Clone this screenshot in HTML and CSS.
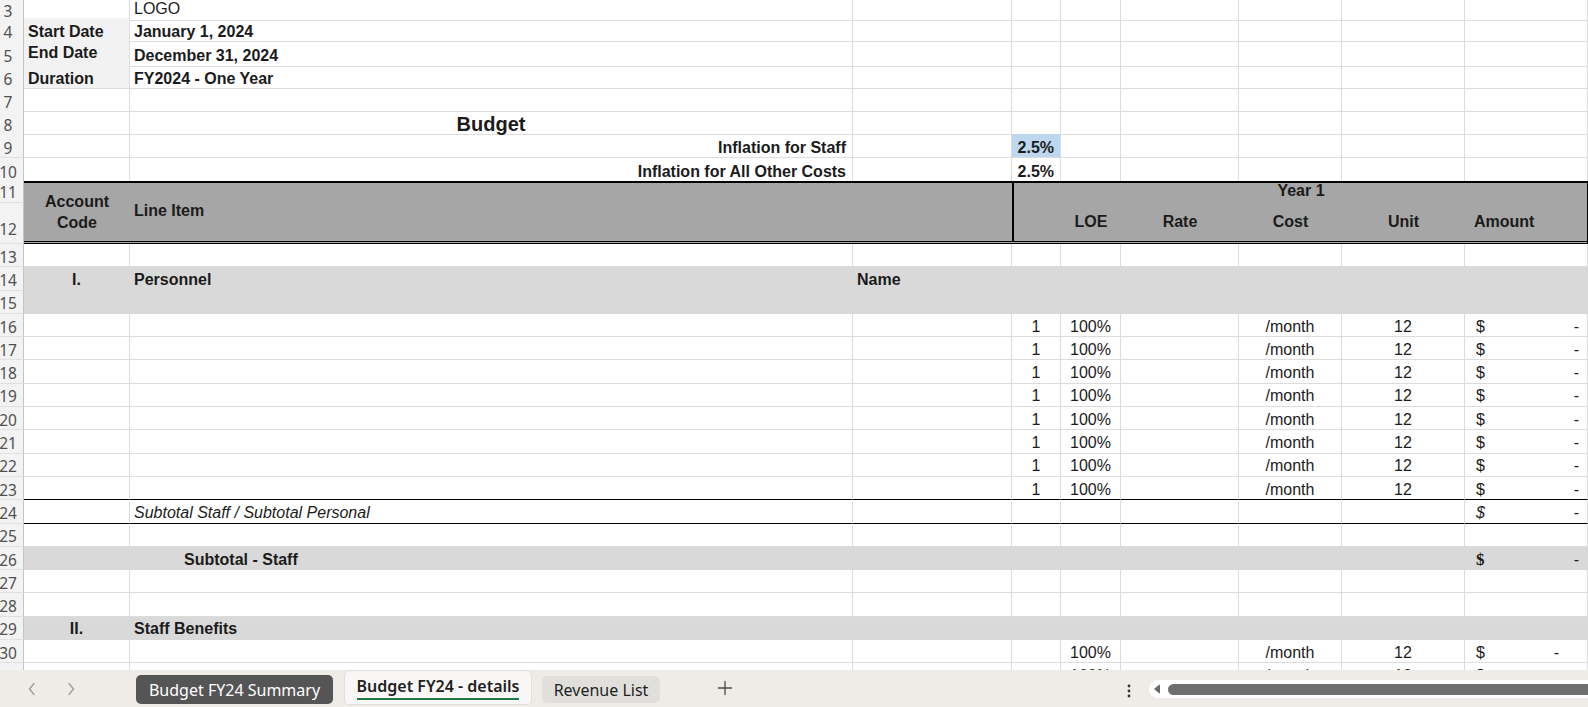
FILE: index.html
```html
<!DOCTYPE html>
<html>
<head>
<meta charset="utf-8">
<title>Budget FY24 - details</title>
<link rel="stylesheet" href="styles.css">
</head>
<body>
<div class="app">
  <div class="sheet">
    <div class="rows">
      <div class="row u top">
        <div class="rh">3</div><div></div><div>LOGO</div><div></div><div></div><div></div><div></div><div></div><div></div><div></div>
      </div>
      <div class="row u">
        <div class="rh">4</div><div class="lab b">Start Date</div><div class="b">January 1, 2024</div><div></div><div></div><div></div><div></div><div></div><div></div><div></div>
      </div>
      <div class="row u">
        <div class="rh">5</div><div class="lab b up">End Date</div><div class="b">December 31, 2024</div><div></div><div></div><div></div><div></div><div></div><div></div><div></div>
      </div>
      <div class="row u">
        <div class="rh">6</div><div class="lab b">Duration</div><div class="b">FY2024 - One Year</div><div></div><div></div><div></div><div></div><div></div><div></div><div></div>
      </div>
      <div class="row u">
        <div class="rh">7</div><div></div><div></div><div></div><div></div><div></div><div></div><div></div><div></div><div></div>
      </div>
      <div class="row u">
        <div class="rh">8</div><div></div><div class="budget b">Budget</div><div></div><div></div><div></div><div></div><div></div><div></div><div></div>
      </div>
      <div class="row u">
        <div class="rh">9</div><div></div><div class="r b">Inflation for Staff</div><div></div><div class="r b blue">2.5%</div><div></div><div></div><div></div><div></div><div></div>
      </div>
      <div class="row u">
        <div class="rh">10</div><div></div><div class="r b">Inflation for All Other Costs</div><div></div><div class="r b">2.5%</div><div></div><div></div><div></div><div></div><div></div>
      </div>

      <div class="hdr">
        <div class="rh rh11">11</div>
        <div class="rh rh12">12</div>
        <div class="hbox">
          <div class="acct">Account<br>Code</div>
          <div class="li">Line Item</div>
          <div class="yr">Year 1</div>
          <div class="dbl"></div>
          <div class="hc c5">LOE</div>
          <div class="hc c6">Rate</div>
          <div class="hc c7">Cost</div>
          <div class="hc c8">Unit</div>
          <div class="hc c9 amt">Amount</div>
        </div>
      </div>

      <div class="row">
        <div class="rh">13</div><div></div><div></div><div></div><div></div><div></div><div></div><div></div><div></div><div></div>
      </div>
      <div class="row g">
        <div class="rh">14</div><div class="ctr b">I.</div><div class="b">Personnel</div><div class="b">Name</div><div></div><div></div><div></div><div></div><div></div><div></div>
      </div>
      <div class="row g">
        <div class="rh">15</div><div></div><div></div><div></div><div></div><div></div><div></div><div></div><div></div><div></div>
      </div>
      <div class="row">
        <div class="rh">16</div><div></div><div></div><div></div><div class="ctr">1</div><div class="ctr">100%</div><div></div><div class="ctr">/month</div><div class="ctr">12</div><div class="acc"><span>$</span><span>-</span></div>
      </div>
      <div class="row">
        <div class="rh">17</div><div></div><div></div><div></div><div class="ctr">1</div><div class="ctr">100%</div><div></div><div class="ctr">/month</div><div class="ctr">12</div><div class="acc"><span>$</span><span>-</span></div>
      </div>
      <div class="row">
        <div class="rh">18</div><div></div><div></div><div></div><div class="ctr">1</div><div class="ctr">100%</div><div></div><div class="ctr">/month</div><div class="ctr">12</div><div class="acc"><span>$</span><span>-</span></div>
      </div>
      <div class="row">
        <div class="rh">19</div><div></div><div></div><div></div><div class="ctr">1</div><div class="ctr">100%</div><div></div><div class="ctr">/month</div><div class="ctr">12</div><div class="acc"><span>$</span><span>-</span></div>
      </div>
      <div class="row">
        <div class="rh">20</div><div></div><div></div><div></div><div class="ctr">1</div><div class="ctr">100%</div><div></div><div class="ctr">/month</div><div class="ctr">12</div><div class="acc"><span>$</span><span>-</span></div>
      </div>
      <div class="row">
        <div class="rh">21</div><div></div><div></div><div></div><div class="ctr">1</div><div class="ctr">100%</div><div></div><div class="ctr">/month</div><div class="ctr">12</div><div class="acc"><span>$</span><span>-</span></div>
      </div>
      <div class="row">
        <div class="rh">22</div><div></div><div></div><div></div><div class="ctr">1</div><div class="ctr">100%</div><div></div><div class="ctr">/month</div><div class="ctr">12</div><div class="acc"><span>$</span><span>-</span></div>
      </div>
      <div class="row pre-sub">
        <div class="rh">23</div><div></div><div></div><div></div><div class="ctr">1</div><div class="ctr">100%</div><div></div><div class="ctr">/month</div><div class="ctr">12</div><div class="acc"><span>$</span><span>-</span></div>
      </div>
      <div class="row sub">
        <div class="rh">24</div><div></div><div class="it">Subtotal Staff / Subtotal Personal</div><div></div><div></div><div></div><div></div><div></div><div></div><div class="acc"><span class="it">$</span><span>-</span></div>
      </div>
      <div class="row">
        <div class="rh">25</div><div></div><div></div><div></div><div></div><div></div><div></div><div></div><div></div><div></div>
      </div>
      <div class="row g">
        <div class="rh">26</div><div></div><div class="b ind">Subtotal - Staff</div><div></div><div></div><div></div><div></div><div></div><div></div><div class="acc"><span class="serif">$</span><span>-</span></div>
      </div>
      <div class="row">
        <div class="rh">27</div><div></div><div></div><div></div><div></div><div></div><div></div><div></div><div></div><div></div>
      </div>
      <div class="row">
        <div class="rh">28</div><div></div><div></div><div></div><div></div><div></div><div></div><div></div><div></div><div></div>
      </div>
      <div class="row g">
        <div class="rh">29</div><div class="ctr b">II.</div><div class="b">Staff Benefits</div><div></div><div></div><div></div><div></div><div></div><div></div><div></div>
      </div>
      <div class="row">
        <div class="rh">30</div><div></div><div></div><div></div><div></div><div class="ctr">100%</div><div></div><div class="ctr">/month</div><div class="ctr">12</div><div class="acc wide"><span>$</span><span>-</span></div>
      </div>
      <div class="row">
        <div class="rh">31</div><div></div><div></div><div></div><div></div><div class="ctr">100%</div><div></div><div class="ctr">/month</div><div class="ctr">12</div><div class="acc wide"><span>$</span><span>-</span></div>
      </div>
    </div>
  </div>

  <div class="tabbar">
    <div class="nav nl">
      <svg width="10" height="14" viewBox="0 0 10 14"><polyline points="7,1.5 2.5,7 7,12.5" fill="none" stroke="#9a9a9a" stroke-width="1.3" stroke-linecap="round" stroke-linejoin="round"/></svg>
    </div>
    <div class="nav nr">
      <svg width="10" height="14" viewBox="0 0 10 14"><polyline points="3,1.5 7.5,7 3,12.5" fill="none" stroke="#9a9a9a" stroke-width="1.3" stroke-linecap="round" stroke-linejoin="round"/></svg>
    </div>
    <div class="tab dark">Budget FY24 Summary</div>
    <div class="tab active"><span>Budget FY24 - details</span></div>
    <div class="tab light">Revenue List</div>
    <div class="plus">
      <svg width="16" height="16" viewBox="0 0 16 16"><path d="M8 1.5V14.5M1.5 8H14.5" stroke="#4a4a4a" stroke-width="1.3" stroke-linecap="round"/></svg>
    </div>
    <div class="more">
      <svg width="6" height="14" viewBox="0 0 6 14"><circle cx="3" cy="2" r="1.4" fill="#333"/><circle cx="3" cy="7" r="1.4" fill="#333"/><circle cx="3" cy="12" r="1.4" fill="#333"/></svg>
    </div>
    <div class="hs">
      <svg class="arr" width="8" height="10" viewBox="0 0 8 10"><path d="M6.5 1 L1.5 5 L6.5 9 Z" fill="#6a6a6a" stroke="#6a6a6a" stroke-width="1" stroke-linejoin="round"/></svg>
      <div class="thumb"></div>
    </div>
  </div>
</div>
</body>
</html>
```

FILE: styles.css
```css
* { box-sizing: border-box; }

html, body {
  margin: 0;
  padding: 0;
}

body {
  width: 1588px;
  height: 707px;
  overflow: hidden;
  background: #ffffff;
  font-family: "Liberation Sans", Arial, sans-serif;
  font-size: 16px;
  color: #1b1b1b;
}

.app {
  display: flex;
  flex-direction: column;
  height: 707px;
}

.sheet {
  flex: none;
  height: 670px;
  overflow: hidden;
  background: #ffffff;
}

.rows {
  margin-top: -5.25px;
}

.row {
  display: grid;
  grid-template-columns: 24px 106px 723px 159px 49px 60px 118px 103px 123px 123px;
  height: 23.3px;
}

.row.u {
  height: 23.25px;
}

.row > div {
  display: flex;
  align-items: center;
  padding: 3px 4px 0 4px;
  white-space: nowrap;
  border-right: 1px solid #dcdcdc;
  border-bottom: 1px solid #dcdcdc;
  line-height: 18px;
}

.row.u > div {
  padding-top: 5px;
}

.row.top > div {
  padding-top: 3px;
}

.rh,
.row > .rh {
  font-family: "Noto Sans", "Open Sans", sans-serif;
  font-size: 15.5px;
  color: #505050;
  background: #f3f3f3;
  justify-content: center;
  padding: 3px 7px 0 0;
  border-right: 1px solid #c4c4c4;
  border-bottom: 1px solid #e0e0e0;
}

.row.u > .rh {
  padding: 5px 7px 0 0;
}

.row.top > .rh {
  padding: 7px 7px 0 0;
}

.b { font-weight: bold; }
.it { font-style: italic; }

.row > .r {
  justify-content: flex-end;
  padding-right: 6px;
}

.row > .ctr { justify-content: center; }

.row > .lab { background: #f2f2f2; }
.row.u > .up { padding-top: 3px; padding-bottom: 4px; }

.row > .blue { background: #bdd7ee; }

.row.u > .budget {
  justify-content: center;
  font-size: 20px;
  padding-top: 2px;
}

.row > .acc {
  justify-content: space-between;
  padding-left: 11px;
  padding-right: 8px;
}

.row > .acc.wide { padding-right: 28px; }

.row > .ind { padding-left: 54px; }

.serif {
  font-family: "Liberation Serif", "Times New Roman", serif;
  font-weight: bold;
  font-size: 17px;
}

/* gray section rows */
.row.g > div:not(.rh) {
  background: #d9d9d9;
  border-right-color: #d9d9d9;
  border-bottom-color: #d9d9d9;
}

/* subtotal borders */
.row.pre-sub > div:not(.rh),
.row.sub > div:not(.rh) {
  border-bottom-color: #000000;
}

/* header block */
.hdr {
  display: grid;
  grid-template-columns: 24px 1564px;
  grid-template-rows: 22px 41.25px;
  height: 63.25px;
}

.hdr .rh {
  display: flex;
  align-items: center;
}

.rh11 {
  grid-column: 1;
  grid-row: 1;
  padding-top: 2px !important;
}

.rh12 {
  grid-column: 1;
  grid-row: 2;
  align-items: flex-end !important;
  padding-bottom: 3px !important;
}

.hbox {
  grid-column: 2;
  grid-row: 1 / 3;
  background: #a6a6a6;
  border-top: 2px solid #000000;
  border-bottom: 3px double #000000;
  border-right: 1px solid #000000;
  display: grid;
  grid-template-columns: 106px 723px 159px 49px 60px 118px 103px 123px 123px;
  grid-template-rows: 20px 1fr;
  font-weight: bold;
}

.hbox > div {
  display: flex;
  align-items: center;
  white-space: nowrap;
}

.acct {
  grid-column: 1;
  grid-row: 1 / 3;
  justify-content: center;
  text-align: center;
  line-height: 20.5px;
  padding-top: 2px;
}

.li {
  grid-column: 2 / 4;
  grid-row: 1 / 3;
  padding-left: 4px;
  padding-bottom: 1px;
}

.yr {
  grid-column: 4 / 10;
  grid-row: 1;
  justify-content: center;
  border-left: 2px solid #000000;
  padding-bottom: 3px;
}

.dbl {
  grid-column: 4;
  grid-row: 2;
  border-left: 2px solid #000000;
}

.hc {
  grid-row: 2;
  justify-content: center;
}

.c5 { grid-column: 5; }
.c6 { grid-column: 6; }
.c7 { grid-column: 7; }
.c8 { grid-column: 8; }
.c9 { grid-column: 9; }

.hbox > .amt {
  justify-content: flex-start;
  padding-left: 9px;
}

/* sheet tab bar */
.tabbar {
  flex: none;
  height: 37px;
  background: #efece8;
  display: flex;
  align-items: flex-start;
  font-family: "Noto Sans", "Open Sans", sans-serif;
  font-size: 16px;
  color: #1f1f1f;
}

.nav {
  width: 10px;
  height: 14px;
  margin-top: 12px;
  display: flex;
}

.nl { margin-left: 27px; }
.nr { margin-left: 29px; }

.tab {
  display: flex;
  align-items: center;
  justify-content: center;
  white-space: nowrap;
  border-radius: 5px;
}

.tab.dark {
  margin-left: 60px;
  margin-top: 5px;
  width: 197px;
  height: 29px;
  background: #555555;
  color: #ffffff;
}

.tab.active {
  margin-left: 11px;
  margin-top: 0;
  width: 188px;
  height: 35px;
  background: #f8f7f6;
  border: 1px solid #e2dfdb;
  border-radius: 6px 6px 4px 4px;
  align-items: flex-start;
  padding-top: 4px;
  font-weight: 600;
}

.tab.active span {
  display: inline-block;
  line-height: 22px;
  padding-bottom: 1px;
  border-bottom: 2.5px solid #1d7846;
}

.tab.light {
  margin-left: 10px;
  margin-top: 6px;
  width: 118px;
  height: 27px;
  background: #e1dfdc;
}

.plus {
  margin-left: 57px;
  margin-top: 10px;
  width: 16px;
  height: 16px;
  display: flex;
}

.more {
  margin-left: 393px;
  margin-top: 14px;
  width: 6px;
  height: 14px;
  display: flex;
}

.hs {
  margin-left: 17px;
  margin-top: 10px;
  flex: 1;
  height: 18px;
  background: #ffffff;
  border-radius: 9px 0 0 9px;
  display: flex;
  align-items: center;
}

.arr {
  margin-left: 4px;
  flex: none;
}

.thumb {
  margin-left: 7px;
  flex: 1;
  height: 11px;
  background: #6f6f6f;
  border-radius: 6px 0 0 6px;
}
```
